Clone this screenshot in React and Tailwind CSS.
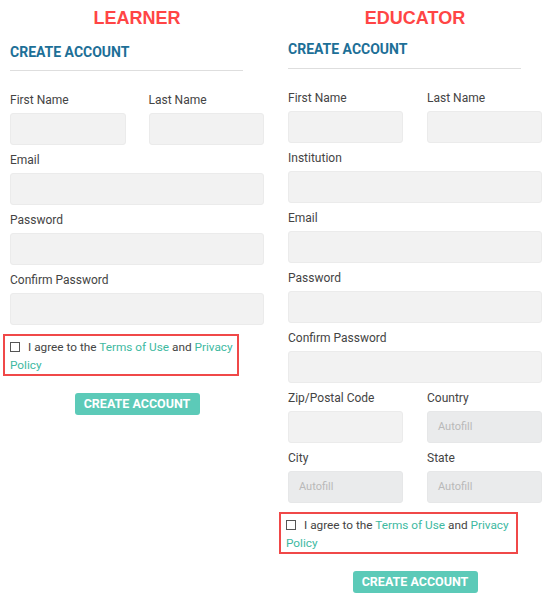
import React from "react";

const body = { fontFamily: "Roboto, 'Liberation Sans', Arial, sans-serif" };

function Label({ children }) {
  return <div className="h-[16px] leading-[16px] text-[12px] text-[#444] mb-[5px]">{children}</div>;
}

function Field({ label, autofill }) {
  return (
    <div className="mb-[7px]">
      <Label>{label}</Label>
      <div
        className={
          "h-[32px] rounded-[3px] border flex items-center pl-[10px] text-[11px] text-[#b9b9b9] " +
          (autofill ? "bg-[#eaebec] border-[#e6e7e8]" : "bg-[#f2f2f2] border-[#ebebeb]")
        }
      >
        {autofill ? "Autofill" : null}
      </div>
    </div>
  );
}

function Agree({ className }) {
  return (
    <div className={"border-2 border-[#f04848] pl-[5px] pr-0 pt-[2px] pb-0 " + className}>
      <div className="text-[11.8px] leading-[18px] text-[#444]">
        <span className="inline-block w-[10px] h-[10px] border border-[#555] bg-white align-[-1px] mr-[8px]"></span>
        I agree to the <span className="text-[#3db9a1]">Terms of Use</span> and{" "}
        <span className="text-[#3db9a1]">Privacy</span> <span className="text-[#3db9a1]">Policy</span>
      </div>
    </div>
  );
}

function Button() {
  return (
    <div className="flex justify-center">
      <div className="w-[125px] h-[22px] rounded-[3px] bg-[#5ccab8] text-white font-bold text-[12.5px] flex items-center justify-center">
        CREATE ACCOUNT
      </div>
    </div>
  );
}

function Title({ children }) {
  return (
    <div
      className="pt-[6px] h-[30px] leading-[24px] text-[18px] font-bold text-[#ff4545] text-center"
      style={{ fontFamily: "'Liberation Sans', Arial, sans-serif" }}
    >
      {children}
    </div>
  );
}

export default function App() {
  return (
    <div className="w-[550px] h-[604px] bg-white flex gap-[24px] pl-[10px]" style={body}>
      {/* Learner */}
      <div className="w-[254px] flex flex-col">
        <Title>LEARNER</Title>
        <div className="mt-[14px] h-[16px] leading-[16px] text-[14px] font-bold text-[#1d6f97]">CREATE ACCOUNT</div>
        <div className="mt-[10px] w-[233px] h-[1px] bg-[#dedede]"></div>
        <div className="mt-[21px]">
          <div className="grid grid-cols-2 gap-x-[23px]">
            <Field label="First Name" />
            <Field label="Last Name" />
          </div>
          <Field label="Email" />
          <Field label="Password" />
          <Field label="Confirm Password" />
        </div>
        <Agree className="mt-[2px] -ml-[7px] w-[236px]" />
        <div className="mt-[17px]">
          <Button />
        </div>
      </div>

      {/* Educator */}
      <div className="w-[254px] flex flex-col">
        <Title>EDUCATOR</Title>
        <div className="mt-[11px] h-[16px] leading-[16px] text-[14px] font-bold text-[#1d6f97]">CREATE ACCOUNT</div>
        <div className="mt-[11px] w-[233px] h-[1px] bg-[#dedede]"></div>
        <div className="mt-[21px]">
          <div className="grid grid-cols-2 gap-x-[24px]">
            <Field label="First Name" />
            <Field label="Last Name" />
          </div>
          <Field label="Institution" />
          <Field label="Email" />
          <Field label="Password" />
          <Field label="Confirm Password" />
          <div className="grid grid-cols-2 gap-x-[24px]">
            <Field label="Zip/Postal Code" />
            <Field label="Country" autofill />
            <Field label="City" autofill />
            <Field label="State" autofill />
          </div>
        </div>
        <Agree className="mt-[2px] -ml-[9px] w-[239px]" />
        <div className="mt-[17px]">
          <Button />
        </div>
      </div>
    </div>
  );
}
